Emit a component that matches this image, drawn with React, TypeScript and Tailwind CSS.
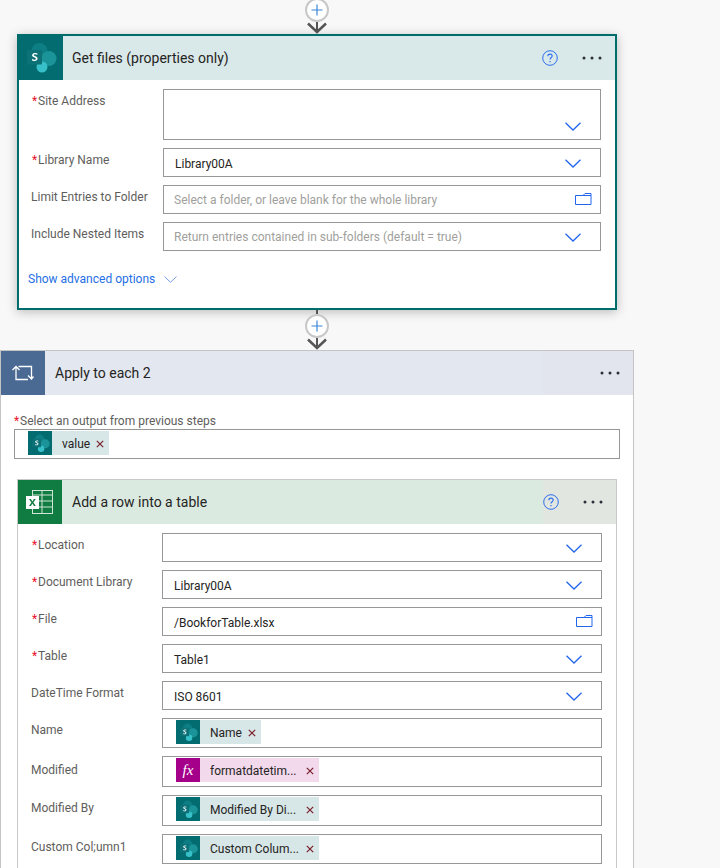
import React from "react";

function SharePointIcon({ size }: { size: number }) {
  return (
    <svg width={size} height={size} viewBox="0 0 32 32" fill="none">
      <circle cx="14.500" cy="9" r="8" fill="#0d7f84" />
      <circle cx="24" cy="16.500" r="7.500" fill="#1a9499" />
      <circle cx="17" cy="25" r="5.500" fill="#37c0c8" />
      <rect x="2" y="8" width="15" height="14.500" rx="1.300" fill="#0c7278" />
      <path d="M12.600 11.600c-.9-.6-1.900-.8-2.900-.7-1.500.1-2.600 1-2.600 2.300 0 2.400 3.800 2 3.800 3.500 0 .6-.6 1-1.400 1-.9 0-1.800-.4-2.400-.9v1.700c.7.4 1.600.6 2.500.6 1.800 0 3-1 3-2.500 0-2.500-3.800-2.100-3.800-3.500 0-.5.5-.9 1.200-.9.8 0 1.500.2 2.200.6z" fill="#fff" />
    </svg>
  );
}

function ExcelIcon() {
  return (
    <svg width="28" height="28" viewBox="0 0 28 28" fill="none">
      <rect x="6.500" y="2.500" width="20" height="23" stroke="#cfe5d8" strokeWidth="1" />
      <path d="M16 2.500v23M6.500 7h20M6.500 13h20M6.500 19h20" stroke="#cfe5d8" strokeWidth="1" />
      <rect x="0" y="8" width="13" height="13" fill="#fff" />
      <path d="M3 11h1.900l1.500 2.500L7.900 11h1.800l-2.300 3.500L9.800 18H7.900l-1.500-2.500L4.900 18H3l2.400-3.500z" fill="#107c41" />
    </svg>
  );
}

function LoopIcon() {
  return (
    <svg width="22" height="16" viewBox="0 0 22 16" fill="none" stroke="#fff" strokeWidth="1.300">
      <path d="M0.500 5L4 1.500L7.500 5M4 2v12.500h12" />
      <path d="M6.500 1.500h13v12.500M16 10.500l3.500 3.500 2-2.500" />
    </svg>
  );
}

function FxIcon() {
  return (
    <div className="w-6 h-6 bg-[#a4008a] flex items-center justify-center text-white italic text-[15px] font-['Liberation_Serif',serif] shrink-0">
      fx
    </div>
  );
}

function Chevron({ color = "#2266ee", small = false }: { color?: string; small?: boolean }) {
  if (small) {
    return (
      <svg width="13" height="7" viewBox="0 0 13 7" fill="none" stroke={color} strokeWidth="1" className="shrink-0">
        <path d="M0.500 0.500L6.500 6.300L12.500 0.500" />
      </svg>
    );
  }
  return (
    <svg width="16" height="9" viewBox="0 0 16 9" fill="none" stroke={color} strokeWidth="1.300" className="shrink-0 mt-[2px]">
      <path d="M0.500 0.800L8 8L15.500 0.800" />
    </svg>
  );
}

function Folder() {
  return (
    <svg width="17" height="12" viewBox="0 0 17 12" fill="none" stroke="#2266ee" strokeWidth="1" className="shrink-0">
      <path d="M0.500 2.500h15.500v9H0.500zM8 2.500l2-2h6v2" />
    </svg>
  );
}

function Help() {
  return (
    <svg width="16" height="16" viewBox="0 0 16 16" fill="none" stroke="#2f6fef" strokeWidth="1" className="shrink-0">
      <circle cx="8" cy="8" r="7.300" />
      <path d="M5.800 6.200c0-1.300 1-2.100 2.200-2.100s2.200.8 2.200 2c0 1.700-2.200 1.700-2.200 3.500" strokeWidth="1.100" />
      <path d="M8 11v1.200" strokeWidth="1.200" />
    </svg>
  );
}

function Dots() {
  return (
    <svg width="20" height="4" viewBox="0 0 20 4" fill="#2b3038" className="shrink-0">
      <circle cx="2" cy="2" r="1.500" />
      <circle cx="10" cy="2" r="1.500" />
      <circle cx="18" cy="2" r="1.500" />
    </svg>
  );
}

function Connector({ line = false }: { line?: boolean }) {
  return (
    <div className="flex flex-col items-center">
      {line && <div className="w-[2px] h-1 bg-[#555]" />}
      <div className="w-6 h-6 rounded-full border-2 border-[#c8c8c8] bg-white flex items-center justify-center">
        <svg width="12" height="12" viewBox="0 0 12 12" stroke="#3a86d8" strokeWidth="1.200">
          <path d="M6 0.500v11M0.500 6h11" />
        </svg>
      </div>
      <svg width="20" height="12" viewBox="0 0 20 12" fill="none" stroke="#555" strokeWidth="2.500">
        <path d="M1 1.500L10 10L19 1.500" />
        <path d="M10 0v10" strokeWidth="2" />
      </svg>
    </div>
  );
}

function Chip({ text, w, kind = "sp" }: { text: string; w: number; kind?: "sp" | "fx" }) {
  const wide = w > 100;
  return (
    <div className={`h-6 flex items-center shrink-0 ${kind === "fx" ? "bg-[#f2d9ec]" : "bg-[#d7e6e7]"}`}>
      {kind === "fx" ? (
        <FxIcon />
      ) : (
        <div className="w-6 h-6 bg-[#036c70] flex items-center justify-center shrink-0">
          <SharePointIcon size={19} />
        </div>
      )}
      <span className={`ml-[10px] pt-[2px] text-[12px] text-[#252423] whitespace-nowrap ${wide ? "w-[86px]" : ""}`}>{text}</span>
      <svg width="8" height="8" viewBox="0 0 8 8" stroke="#7a1f2b" strokeWidth="1.200" className={`mt-[2px] ${wide ? "ml-[10px] mr-[5px]" : "ml-[6px] mr-[5px]"}`}>
        <path d="M0.800 0.800l6.400 6.400M7.200 0.800l-6.400 6.400" />
      </svg>
    </div>
  );
}

function Field({
  label,
  required,
  children,
  labelW,
  inputW,
  h = 29,
  end = false,
  gapClass = "mt-2",
}: {
  label: string;
  required?: boolean;
  children?: React.ReactNode;
  labelW: string;
  inputW: string;
  h?: number;
  end?: boolean;
  gapClass?: string;
}) {
  return (
    <div className={`flex ${gapClass}`}>
      <div className={`${labelW} shrink-0 pt-[2px] text-[12px] leading-5 text-[#605e5c] whitespace-nowrap`}>
        {required && <span className="text-[#e8112d] inline-block w-[6px] ml-px">*</span>}
        {label}
      </div>
      <div
        className={`${inputW} border border-[#979797] bg-white flex justify-between pl-[10px] pr-[19px] ${end ? "items-end pb-[8px]" : "items-center"}`}
        style={{ height: h }}
      >
        {children}
      </div>
    </div>
  );
}

function Value({ children }: { children: React.ReactNode }) {
  return <span className="ml-px pt-[2px] text-[12px] text-[#252423]">{children}</span>;
}

function Hint({ children }: { children: React.ReactNode }) {
  return <span className="text-[12px] text-[#a19f9d]">{children}</span>;
}

function ChipField(props: { label: string; h: number; labelPad?: string; chip: React.ReactNode }) {
  return (
    <div className="flex mt-2">
      <div className={`w-[131px] shrink-0 ${props.labelPad ?? "pt-[2px]"} text-[12px] leading-5 text-[#605e5c] whitespace-nowrap`}>{props.label}</div>
      <div className="w-[440px] border border-[#979797] bg-white flex items-start pt-px pl-[13px]" style={{ height: props.h }}>
        {props.chip}
      </div>
    </div>
  );
}

export default function App() {
  const L1 = "w-[132px]";
  const I1 = "w-[438px]";
  const L2 = "w-[131px]";
  const I2 = "w-[440px]";
  return (
    <div className="w-[720px] h-[868px] overflow-hidden bg-[#f8f8f8] font-['Roboto',sans-serif]">
      <div className="ml-[17px] w-[600px] flex flex-col items-center -mt-[2px]">
        <Connector />
        <div className="w-[600px] border-2 border-[#006d6d] bg-white shadow-[0_2px_10px_rgba(0,0,0,0.25)]">
          <div className="h-11 flex items-center bg-[#d9e8e8]">
            <div className="w-11 h-11 bg-[#036c70] flex items-center justify-center">
              <SharePointIcon size={32} />
            </div>
            <div className="ml-[9px] text-[14px] text-[#252423] flex-1">Get files (properties only)</div>
            <Help />
            <div className="ml-[24px] mr-[13px]">
              <Dots />
            </div>
          </div>
          <div className="pl-3 pt-[9px] pb-[19px]">
            <Field label="Site Address" required labelW={L1} inputW={I1} h={51} end gapClass="">
              <span />
              <Chevron />
            </Field>
            <Field label="Library Name" required labelW={L1} inputW={I1}>
              <Value>Library00A</Value>
              <Chevron />
            </Field>
            <Field label="Limit Entries to Folder" labelW={L1} inputW={I1}>
              <Hint>Select a folder, or leave blank for the whole library</Hint>
              <span className="-mr-[11px] -mt-[1px]">
                <Folder />
              </span>
            </Field>
            <Field label="Include Nested Items" labelW={L1} inputW={I1}>
              <Hint>Return entries contained in sub-folders (default = true)</Hint>
              <Chevron />
            </Field>
            <div className="mt-[18px] -ml-[3px] h-5 flex items-center gap-[9px] text-[12px] text-[#1f6fe5]">
              Show advanced options
              <Chevron color="#7a9be8" small />
            </div>
          </div>
        </div>
        <Connector line />
      </div>
      <div className="w-[634px] border border-[#c4c4c4] bg-white pb-10">
        <div className="h-11 flex items-center bg-[#e3e7ef]">
          <div className="w-11 h-11 bg-[#4a6a93] flex items-center justify-center">
            <LoopIcon />
          </div>
          <div className="ml-[10px] text-[14px] text-[#252423] flex-1">Apply to each 2</div>
          <div className="w-[90px] h-11 bg-[#e2e5ee] flex items-center justify-end pr-[13px]">
            <Dots />
          </div>
        </div>
        <div className="mt-[18px] ml-[13px] h-4 text-[12px] leading-4 text-[#605e5c] whitespace-nowrap">
          <span className="text-[#e8112d] inline-block w-[6px]">*</span>
          Select an output from previous steps
        </div>
        <div className="ml-[13px] w-[606px] h-[30px] border border-[#979797] flex items-start pt-px pl-[13px]">
          <Chip text="value" w={81} />
        </div>
        <div className="mt-5 ml-4 w-[600px] border border-[#c8c8c8] bg-white">
          <div className="h-11 flex items-center bg-[#dbeae1]">
            <div className="w-11 h-11 bg-[#107c41] flex items-center justify-center">
              <ExcelIcon />
            </div>
            <div className="ml-[10px] text-[14px] text-[#252423] flex-1">Add a row into a table</div>
            <div className="w-[73px] h-11 bg-[#e1e6e0] flex items-center">
              <Help />
              <div className="ml-[24px]">
                <Dots />
              </div>
            </div>
          </div>
          <div className="pl-[13px] pt-[9px] pb-10">
            <Field label="Location" required labelW={L2} inputW={I2} gapClass="">
              <span />
              <Chevron />
            </Field>
            <Field label="Document Library" required labelW={L2} inputW={I2}>
              <Value>Library00A</Value>
              <Chevron />
            </Field>
            <Field label="File" required labelW={L2} inputW={I2}>
              <Value>/BookforTable.xlsx</Value>
              <span className="-mr-[11px] -mt-[1px]">
                <Folder />
              </span>
            </Field>
            <Field label="Table" required labelW={L2} inputW={I2}>
              <Value>Table1</Value>
              <Chevron />
            </Field>
            <Field label="DateTime Format" labelW={L2} inputW={I2}>
              <Value>ISO 8601</Value>
              <Chevron />
            </Field>
            <ChipField label="Name" h={30} chip={<Chip text="Name" w={85} />} />
            <ChipField label="Modified" h={31} labelPad="pt-[4px]" chip={<Chip text="formatdatetim..." w={143} kind="fx" />} />
            <ChipField label="Modified By" h={31} labelPad="pt-[3px]" chip={<Chip text="Modified By Di..." w={143} />} />
            <ChipField label="Custom Col;umn1" h={30} labelPad="pt-[3px]" chip={<Chip text="Custom Colum..." w={143} />} />
          </div>
        </div>
      </div>
    </div>
  );
}
